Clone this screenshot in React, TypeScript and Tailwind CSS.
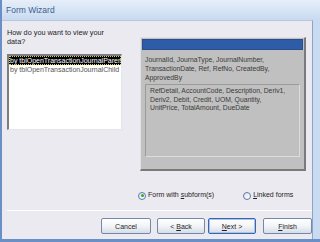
import React from 'react';

const Radio: React.FC<{ checked?: boolean }> = ({ checked }) => (
  <span className="w-[8px] h-[8px] rounded-full border border-[#5d7ca8] bg-gradient-to-br from-[#dfe3ea] to-white flex items-center justify-center shrink-0">
    {checked && <span className="w-[3px] h-[3px] rounded-full bg-[#2fa82f]" />}
  </span>
);

interface BtnProps {
  children: React.ReactNode;
  width: string;
  focused?: boolean;
}

const WizButton: React.FC<BtnProps> = ({ children, width, focused }) => (
  <button
    type="button"
    className={`${width} h-[16px] rounded-[2px] border ${
      focused ? 'border-[#3b66ad] shadow-[inset_0_0_0_1px_#a9c3ea]' : 'border-[#7488a8]'
    } bg-gradient-to-b from-white via-[#f3f4f7] to-[#d6dde9] text-[7px] text-[#1e1e1e] leading-none flex items-center justify-center`}
  >
    {children}
  </button>
);

export default function App() {
  return (
    <div
      className="w-[320px] h-[242px] flex flex-col overflow-hidden bg-[#c9dbf1] border-l-2 border-[#6a8fc6]"
      style={{ fontFamily: '"Liberation Sans", Arial, sans-serif' }}
    >
      {/* title bar */}
      <div className="h-[20px] shrink-0 bg-gradient-to-b from-[#e6effa] to-[#c8daf0] pl-[4px] flex items-center text-[8.5px] text-[#3d5d8e]">
        Form Wizard
      </div>

      <div className="flex-1 flex">
        {/* dialog body */}
        <div className="w-[311px] bg-[#ebeaf0] border-r border-[#8ea6c6] border-t border-t-[#b6c8e0] flex flex-col">
          <div className="flex items-start h-[150px]">
            {/* left column */}
            <div className="ml-[5px] w-[115px] pt-[7px]">
              <p className="text-[7.3px] leading-[9px] text-[#1c1c1c]">
                How do you want to view your
                <br />
                data?
              </p>
              <div className="mt-[8px] h-[76px] bg-white border-t-2 border-l-2 border-t-[#7d7d7d] border-l-[#7d7d7d] border-r border-b border-r-[#e6e6e6] border-b-[#e6e6e6] overflow-hidden">
                <div className="h-[9px] bg-black text-white text-[7px] leading-[9px] pl-[1px] whitespace-nowrap outline outline-1 outline-dotted outline-[#d8d050] -outline-offset-1">
                  by tblOpenTransactionJournalParent
                </div>
                <div className="h-[9px] text-[#555] text-[7px] leading-[9px] pl-[1px] whitespace-nowrap">
                  by tblOpenTransactionJournalChild
                </div>
              </div>
            </div>

            {/* preview panel */}
            <div className="ml-[18px] mt-[16px] w-[166px] h-[134px] bg-[#c0c0c0] border-t border-l border-t-[#e2e2e2] border-l-[#e2e2e2] border-r-2 border-b-2 border-r-[#7a7a7a] border-b-[#7a7a7a] flex flex-col">
              <div className="mx-[1px] mt-[1px] h-[11px] bg-[#2f5ca7] border border-[#274f91]" />
              <p className="px-[4px] pt-[5px] text-[6.8px] leading-[9px] text-[#3a3a3a]">
                JournalId, JournaType, JournalNumber,
                <br />
                TransactionDate, Ref, RefNo, CreatedBy,
                <br />
                ApprovedBy
              </p>
              <div className="mx-[4px] mt-[2px] h-[73px] border-t border-l border-t-[#9a9a9a] border-l-[#9a9a9a] border-r border-b border-r-[#dcdcdc] border-b-[#dcdcdc] px-[4px] pt-[2px]">
                <p className="text-[6.8px] leading-[8.6px] text-[#3a3a3a]">
                  RefDetail, AccountCode, Description, Deriv1,
                  <br />
                  Deriv2, Debit, Credit, UOM, Quantity,
                  <br />
                  UnitPrice, TotalAmount, DueDate
                </p>
              </div>
            </div>
          </div>

          {/* radio options */}
          <div className="mt-[20px] h-[9px] flex items-center text-[7px] text-[#1e1e1e]">
            <span className="ml-[136px]">
              <Radio checked />
            </span>
            <span className="ml-[2px]">
              Form with <span className="underline">s</span>ubform(s)
            </span>
            <span className="ml-[29px]">
              <Radio />
            </span>
            <span className="ml-[2px]">
              <span className="underline">L</span>inked forms
            </span>
          </div>

          <div className="mt-[10px] ml-[5px] w-[305px] h-px bg-[#a8a8ae] border-b border-white" />

          {/* buttons */}
          <div className="mt-[7px] flex">
            <div className="ml-[99px]">
              <WizButton width="w-[50px]">Cancel</WizButton>
            </div>
            <div className="ml-[6px]">
              <WizButton width="w-[48px]">
                &lt; <span className="underline ml-[2px]">B</span>ack
              </WizButton>
            </div>
            <div className="ml-[3px]">
              <WizButton width="w-[48px]" focused>
                <span className="underline">N</span>ext &gt;
              </WizButton>
            </div>
            <div className="ml-[7px]">
              <WizButton width="w-[49px]">
                <span className="underline">F</span>inish
              </WizButton>
            </div>
          </div>
        </div>
        <div className="flex-1 bg-[#c9dbf1]" />
      </div>

      <div className="h-[3px] shrink-0 bg-[#6a8fc6]" />
    </div>
  );
}
